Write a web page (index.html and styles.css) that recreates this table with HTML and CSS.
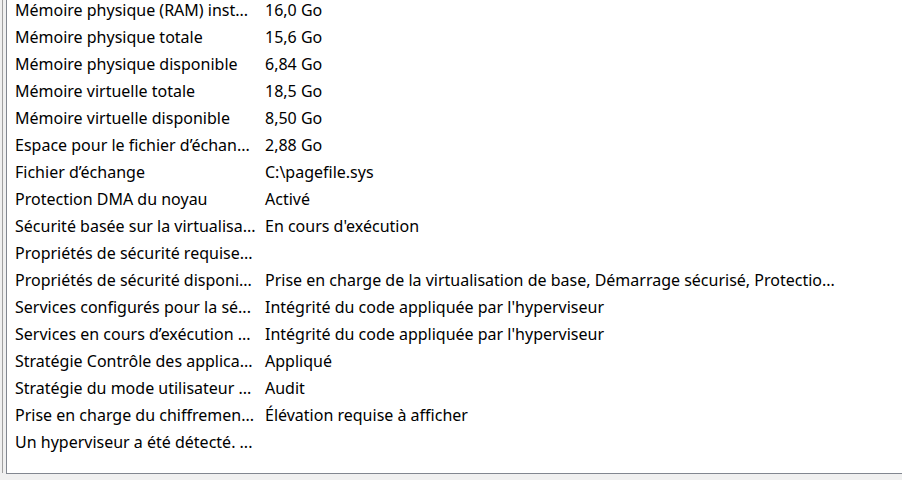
FILE: index.html
```html
<!DOCTYPE html>
<html lang="fr">
<head>
<meta charset="utf-8">
<link rel="stylesheet" href="styles.css">
</head>
<body>
<div class="pane">
  <div class="list">
    <div class="rows">
      <div class="row"><span class="c1">Mémoire physique (RAM) inst...</span><span class="c2">16,0 Go</span></div>
      <div class="row"><span class="c1">Mémoire physique totale</span><span class="c2">15,6 Go</span></div>
      <div class="row"><span class="c1">Mémoire physique disponible</span><span class="c2">6,84 Go</span></div>
      <div class="row"><span class="c1">Mémoire virtuelle totale</span><span class="c2">18,5 Go</span></div>
      <div class="row"><span class="c1">Mémoire virtuelle disponible</span><span class="c2">8,50 Go</span></div>
      <div class="row"><span class="c1">Espace pour le fichier d’échan...</span><span class="c2">2,88 Go</span></div>
      <div class="row"><span class="c1">Fichier d’échange</span><span class="c2">C:\pagefile.sys</span></div>
      <div class="row"><span class="c1">Protection DMA du noyau</span><span class="c2">Activé</span></div>
      <div class="row"><span class="c1">Sécurité basée sur la virtualisa...</span><span class="c2">En cours d'exécution</span></div>
      <div class="row"><span class="c1">Propriétés de sécurité requise...</span><span class="c2"></span></div>
      <div class="row"><span class="c1">Propriétés de sécurité disponi...</span><span class="c2">Prise en charge de la virtualisation de base, Démarrage sécurisé, Protectio...</span></div>
      <div class="row"><span class="c1">Services configurés pour la sé...</span><span class="c2">Intégrité du code appliquée par l'hyperviseur</span></div>
      <div class="row"><span class="c1">Services en cours d’exécution ...</span><span class="c2">Intégrité du code appliquée par l'hyperviseur</span></div>
      <div class="row"><span class="c1">Stratégie Contrôle des applica...</span><span class="c2">Appliqué</span></div>
      <div class="row"><span class="c1">Stratégie du mode utilisateur ...</span><span class="c2">Audit</span></div>
      <div class="row"><span class="c1">Prise en charge du chiffremen...</span><span class="c2">Élévation requise à afficher</span></div>
      <div class="row"><span class="c1">Un hyperviseur a été détecté. ...</span><span class="c2"></span></div>
    </div>
  </div>
</div>
</body>
</html>
```

FILE: styles.css
```css
html, body {
  margin: 0;
  padding: 0;
  background: #f0f0f0;
  height: 480px;
  overflow: hidden;
}
.pane {
  margin-left: 2px;
  border-left: 1px solid #a0a0a0;
  padding-left: 3px;
  height: 473px;
}
.list {
  background: #ffffff;
  border-left: 1px solid #828790;
  border-bottom: 1px solid #828790;
  box-sizing: border-box;
  height: 474px;
  overflow: hidden;
}
.rows {
  margin-top: -4px;
  padding-left: 8px;
}
.row {
  display: flex;
  height: 27px;
  align-items: center;
  font-family: "Noto Sans", sans-serif;
  font-size: 16px;
  color: #000;
  white-space: nowrap;
}
.c1 {
  width: 250px;
  flex: none;
}
```
